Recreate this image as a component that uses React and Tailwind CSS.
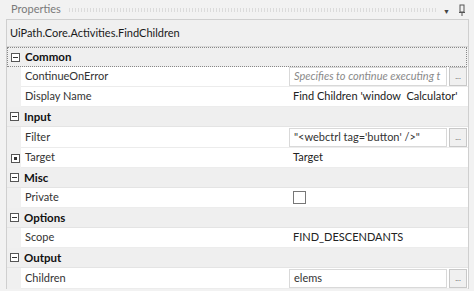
import { useState } from 'react';

const groups = [
  {
    name: 'Common',
    rows: [
      { label: 'ContinueOnError', kind: 'box', value: 'Specifies to continue executing t', hint: true },
      { label: 'Display Name', kind: 'text', value: "Find Children 'window  Calculator'" },
    ],
  },
  {
    name: 'Input',
    rows: [
      { label: 'Filter', kind: 'box', value: "\"<webctrl tag='button' />\"", tall: true },
      { label: 'Target', kind: 'text', value: 'Target', expand: true },
    ],
  },
  { name: 'Misc', rows: [{ label: 'Private', kind: 'check' }] },
  { name: 'Options', rows: [{ label: 'Scope', kind: 'text', value: 'FIND_DESCENDANTS' }] },
  { name: 'Output', rows: [{ label: 'Children', kind: 'box', value: 'elems', tall: true }] },
];

function Toggle({ open }) {
  return (
    <span className="shrink-0 w-[9px] h-[9px] border border-[#555] flex items-center justify-center bg-white">
      {open ? (
        <span className="w-[5px] h-px bg-[#333]" />
      ) : (
        <span className="w-[3px] h-[3px] bg-[#333]" />
      )}
    </span>
  );
}

function Value({ row }) {
  if (row.kind === 'check') {
    return <span className="ml-[4px] w-[13px] h-[13px] border border-[#777] bg-white" />;
  }
  if (row.kind === 'box') {
    return (
      <div className="flex items-center gap-[2px] w-full min-w-0">
        <div className="flex-1 min-w-0 h-[19px] border border-[#d9d9d9] bg-white flex items-center pl-[4px] overflow-hidden whitespace-nowrap">
          <span className={row.hint ? 'italic text-[#8a8a8a]' : 'text-[#333]'}>{row.value}</span>
        </div>
        <button className="shrink-0 w-[18px] h-[19px] border border-[#c8c8c8] bg-[#f0f0f0] text-[8px] leading-none text-[#666] flex items-end justify-center pb-[5px]">
          ...
        </button>
      </div>
    );
  }
  return <span className="pl-[4px] text-[#222] whitespace-pre">{row.value}</span>;
}

export default function App() {
  const [open] = useState(true);
  return (
    <div className="w-[474px] h-[291px] overflow-hidden bg-[#f2f2f2] text-[11px] font-['Lato','Noto_Sans',sans-serif]">
      <div className="h-[19px] flex items-center pl-[11px] pr-[8px] gap-[4px]">
        <span className="text-[#7a7a7a] text-[11px]">Properties</span>
        <div className="flex-1 h-[4px] mx-[3px] bg-[radial-gradient(#c4c4c4_0.7px,transparent_0.8px)] bg-[length:3px_2px]" />
        <span className="text-[7px] text-[#444] mt-[3px]">▼</span>
        <svg width="8" height="12" viewBox="0 0 8 12" className="ml-[4px]">
          <rect x="2" y="1" width="4" height="7" fill="none" stroke="#555" />
          <line x1="1" y1="8.5" x2="7" y2="8.5" stroke="#555" />
          <line x1="4" y1="9" x2="4" y2="12" stroke="#555" />
        </svg>
      </div>
      <div className="ml-[6px] mr-[5px] border-l border-r border-t border-[#cfcfcf] bg-[#f0f0f0]">
        <div className="h-[27px] flex items-center pl-[3px] border-b border-[#d8d8d8] text-[#1a1a1a] text-[11px]">
          UiPath.Core.Activities.FindChildren
        </div>
        {groups.map((g, gi) => (
          <div key={g.name}>
            <div
              className={
                'h-[20px] flex items-center pl-[3px] gap-[5px] bg-[#efefef] ' +
                (gi === 0 ? 'border border-dotted border-[#888] mr-[1px]' : 'border-b border-[#e4e4e4]')
              }
            >
              <Toggle open={open} />
              <span className="font-bold text-[#111] text-[11.5px]">{g.name}</span>
            </div>
            {g.rows.map((r) => (
              <div key={r.label} className={'flex ' + (r.tall ? 'h-[21px]' : 'h-[20px]')}>
                <div className="shrink-0 w-[14px] flex items-center justify-center pl-[3px]">
                  {r.expand && <Toggle open={false} />}
                </div>
                <div className="flex-1 min-w-0 flex bg-white border-b border-[#ececec]">
                  <div className="shrink-0 w-[268px] flex items-center pl-[4px] text-[#333]">{r.label}</div>
                  <div className="flex-1 min-w-0 flex items-center pr-[1px]">
                    <Value row={r} />
                  </div>
                </div>
              </div>
            ))}
          </div>
        ))}
      </div>
    </div>
  );
}
